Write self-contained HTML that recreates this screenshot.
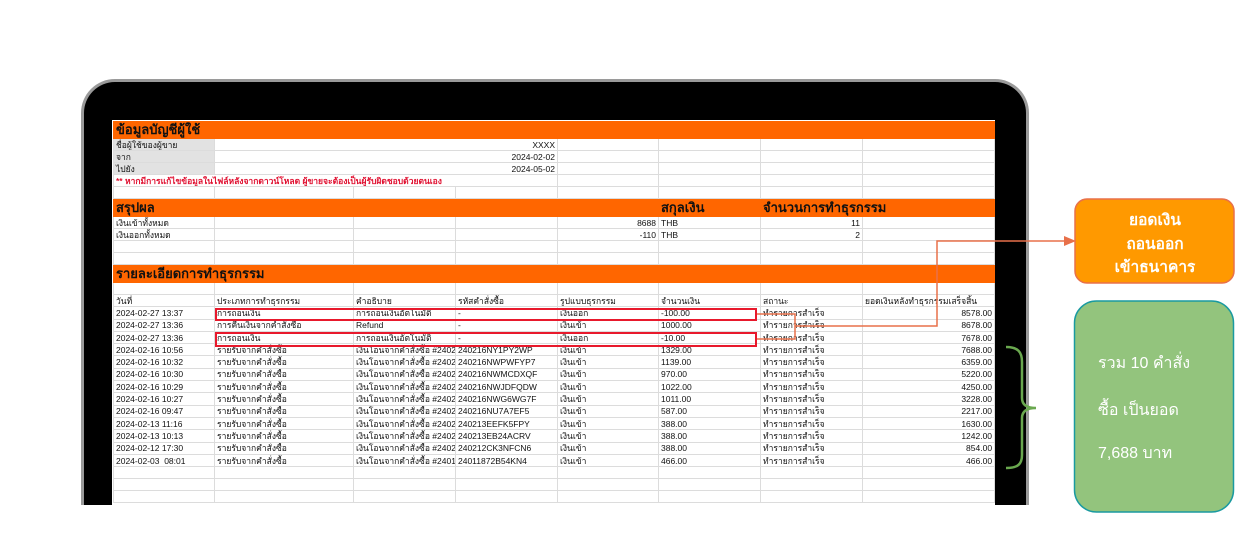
<!DOCTYPE html>
<html><head><meta charset="utf-8">
<style>
*{margin:0;padding:0;box-sizing:border-box}
body{width:1251px;height:526px;background:#fff;position:relative;overflow:hidden;font-family:"Liberation Sans","Noto Sans CJK SC",sans-serif}
.frame{position:absolute;left:81px;top:79px;width:948px;height:460px;border-radius:34px;background:#9a9a9a}
.black{position:absolute;left:84px;top:82px;width:942px;height:460px;border-radius:31px;background:#000}
.screen{position:absolute;left:112px;top:120px;width:883px;height:385px;background:#fff;overflow:hidden}
.cut{position:absolute;left:0;top:505px;width:1060px;height:40px;background:#fff}
table{border-collapse:collapse;table-layout:fixed;width:881px;position:absolute;left:1px;top:1px;font-size:8.5px;color:#111}
td{border:1px solid #dcdcdc;white-space:nowrap;overflow:hidden;padding:0 2px;line-height:10px;vertical-align:middle}
tr.o td{background:#ff6600;border-color:#ff6600;font-weight:bold;font-size:13px;color:#111}
.g{background:#e2e2e2}
.r{text-align:right}
.red{color:#e01030;font-weight:bold}
.box{position:absolute;border:2px solid #e8192c}
</style></head><body>
<div class="frame"></div>
<div class="black"></div>
<div class="screen">
<table>
<colgroup><col style="width:101px"><col style="width:139px"><col style="width:102px"><col style="width:102px"><col style="width:101px"><col style="width:102px"><col style="width:102px"><col style="width:132px"></colgroup>
<tr class="o" style="height:17px"><td colspan="8">ข้อมูลบัญชีผู้ใช้</td></tr>
<tr style="height:12px"><td class="g">ชื่อผู้ใช้ของผู้ขาย</td><td colspan="3" class="r">XXXX</td><td></td><td></td><td></td><td></td></tr>
<tr style="height:12px"><td class="g">จาก</td><td colspan="3" class="r">2024-02-02</td><td></td><td></td><td></td><td></td></tr>
<tr style="height:12px"><td class="g">ไปยัง</td><td colspan="3" class="r">2024-05-02</td><td></td><td></td><td></td><td></td></tr>
<tr style="height:12px"><td colspan="4" class="red">** หากมีการแก้ไขข้อมูลในไฟล์หลังจากดาวน์โหลด ผู้ขายจะต้องเป็นผู้รับผิดชอบด้วยตนเอง</td><td></td><td></td><td></td><td></td></tr>
<tr style="height:12px"><td></td><td></td><td></td><td></td><td></td><td></td><td></td><td></td></tr>
<tr class="o" style="height:18px"><td colspan="5">สรุปผล</td><td>สกุลเงิน</td><td colspan="2">จำนวนการทำธุรกรรม</td></tr>
<tr style="height:12px"><td>เงินเข้าทั้งหมด</td><td></td><td></td><td></td><td class="r">8688</td><td>THB</td><td class="r">11</td><td></td></tr>
<tr style="height:12px"><td>เงินออกทั้งหมด</td><td></td><td></td><td></td><td class="r">-110</td><td>THB</td><td class="r">2</td><td></td></tr>
<tr style="height:12px"><td></td><td></td><td></td><td></td><td></td><td></td><td></td><td></td></tr>
<tr style="height:12px"><td></td><td></td><td></td><td></td><td></td><td></td><td></td><td></td></tr>
<tr class="o" style="height:18px"><td colspan="8">รายละเอียดการทำธุรกรรม</td></tr>
<tr style="height:12px"><td></td><td></td><td></td><td></td><td></td><td></td><td></td><td></td></tr>
<tr style="height:12.3px"><td>วันที่</td><td>ประเภทการทำธุรกรรม</td><td>คำอธิบาย</td><td>รหัสคำสั่งซื้อ</td><td>รูปแบบธุรกรรม</td><td>จำนวนเงิน</td><td>สถานะ</td><td>ยอดเงินหลังทำธุรกรรมเสร็จสิ้น</td></tr>
<tr style="height:12.3px"><td>2024-02-27 13:37</td><td>การถอนเงิน</td><td>การถอนเงินอัตโนมัติ</td><td>-</td><td>เงินออก</td><td>-100.00</td><td>ทำรายการสำเร็จ</td><td class="r">8578.00</td></tr>
<tr style="height:12.3px"><td>2024-02-27 13:36</td><td>การคืนเงินจากคำสั่งซื้อ</td><td>Refund</td><td>-</td><td>เงินเข้า</td><td>1000.00</td><td>ทำรายการสำเร็จ</td><td class="r">8678.00</td></tr>
<tr style="height:12.3px"><td>2024-02-27 13:36</td><td>การถอนเงิน</td><td>การถอนเงินอัตโนมัติ</td><td>-</td><td>เงินออก</td><td>-10.00</td><td>ทำรายการสำเร็จ</td><td class="r">7678.00</td></tr>
<tr style="height:12.3px"><td>2024-02-16 10:56</td><td>รายรับจากคำสั่งซื้อ</td><td>เงินโอนจากคำสั่งซื้อ #240216</td><td>240216NY1PY2WP</td><td>เงินเข้า</td><td>1329.00</td><td>ทำรายการสำเร็จ</td><td class="r">7688.00</td></tr>
<tr style="height:12.3px"><td>2024-02-16 10:32</td><td>รายรับจากคำสั่งซื้อ</td><td>เงินโอนจากคำสั่งซื้อ #240216</td><td>240216NWPWFYP7</td><td>เงินเข้า</td><td>1139.00</td><td>ทำรายการสำเร็จ</td><td class="r">6359.00</td></tr>
<tr style="height:12.3px"><td>2024-02-16 10:30</td><td>รายรับจากคำสั่งซื้อ</td><td>เงินโอนจากคำสั่งซื้อ #240216</td><td>240216NWMCDXQF</td><td>เงินเข้า</td><td>970.00</td><td>ทำรายการสำเร็จ</td><td class="r">5220.00</td></tr>
<tr style="height:12.3px"><td>2024-02-16 10:29</td><td>รายรับจากคำสั่งซื้อ</td><td>เงินโอนจากคำสั่งซื้อ #240216</td><td>240216NWJDFQDW</td><td>เงินเข้า</td><td>1022.00</td><td>ทำรายการสำเร็จ</td><td class="r">4250.00</td></tr>
<tr style="height:12.3px"><td>2024-02-16 10:27</td><td>รายรับจากคำสั่งซื้อ</td><td>เงินโอนจากคำสั่งซื้อ #240216</td><td>240216NWG6WG7F</td><td>เงินเข้า</td><td>1011.00</td><td>ทำรายการสำเร็จ</td><td class="r">3228.00</td></tr>
<tr style="height:12.3px"><td>2024-02-16 09:47</td><td>รายรับจากคำสั่งซื้อ</td><td>เงินโอนจากคำสั่งซื้อ #240216</td><td>240216NU7A7EF5</td><td>เงินเข้า</td><td>587.00</td><td>ทำรายการสำเร็จ</td><td class="r">2217.00</td></tr>
<tr style="height:12.3px"><td>2024-02-13 11:16</td><td>รายรับจากคำสั่งซื้อ</td><td>เงินโอนจากคำสั่งซื้อ #240213</td><td>240213EEFK5FPY</td><td>เงินเข้า</td><td>388.00</td><td>ทำรายการสำเร็จ</td><td class="r">1630.00</td></tr>
<tr style="height:12.3px"><td>2024-02-13 10:13</td><td>รายรับจากคำสั่งซื้อ</td><td>เงินโอนจากคำสั่งซื้อ #240213</td><td>240213EB24ACRV</td><td>เงินเข้า</td><td>388.00</td><td>ทำรายการสำเร็จ</td><td class="r">1242.00</td></tr>
<tr style="height:12.3px"><td>2024-02-12 17:30</td><td>รายรับจากคำสั่งซื้อ</td><td>เงินโอนจากคำสั่งซื้อ #240212</td><td>240212CK3NFCN6</td><td>เงินเข้า</td><td>388.00</td><td>ทำรายการสำเร็จ</td><td class="r">854.00</td></tr>
<tr style="height:12.3px"><td>2024-02-03&nbsp; 08:01</td><td>รายรับจากคำสั่งซื้อ</td><td>เงินโอนจากคำสั่งซื้อ #240118</td><td>24011872B54KN4</td><td>เงินเข้า</td><td>466.00</td><td>ทำรายการสำเร็จ</td><td class="r">466.00</td></tr>
<tr style="height:12px"><td></td><td></td><td></td><td></td><td></td><td></td><td></td><td></td></tr>
<tr style="height:12px"><td></td><td></td><td></td><td></td><td></td><td></td><td></td><td></td></tr>
<tr style="height:12px"><td></td><td></td><td></td><td></td><td></td><td></td><td></td><td></td></tr>
</table>
</div>
<div class="cut"></div>
<div class="box" style="left:215px;top:308px;width:542px;height:13px"></div>
<div class="box" style="left:215px;top:332px;width:542px;height:15px"></div>
<svg style="position:absolute;left:0;top:0" width="1251" height="526">
<g fill="none" stroke="#e8704a" stroke-width="1.5">
<path d="M757 314H795V339H757"/>
<path d="M795 326H937V241H1066"/>
</g>
<path d="M1064 236L1076 241L1064 246Z" fill="#e8704a"/>
<path d="M1006 347C1018 347 1022 352 1022 362V398C1022 404 1026 408 1036 408C1026 408 1022 412 1022 418V455C1022 464 1018 468 1006 468" fill="none" stroke="#6aa84f" stroke-width="2.5"/>
<rect x="1075" y="199" width="159" height="84" rx="12" fill="#ff9900" stroke="#e8704a" stroke-width="1.5"/>
<rect x="1074.5" y="301" width="159" height="211" rx="22" fill="#93c47d" stroke="#1a9aa0" stroke-width="1.5"/>
<g fill="#fff" font-family="Liberation Sans, Noto Sans CJK SC, sans-serif" font-weight="bold" font-size="15.5" text-anchor="middle">
<text x="1155" y="225">ยอดเงิน</text>
<text x="1155" y="249">ถอนออก</text>
<text x="1155" y="272">เข้าธนาคาร</text>
</g>
<g fill="#fff" font-family="Liberation Sans, Noto Sans CJK SC, sans-serif" font-size="16">
<text x="1098" y="368">รวม 10 คำสั่ง</text>
<text x="1098" y="415">ซื้อ เป็นยอด</text>
<text x="1098" y="458">7,688 บาท</text>
</g>
</svg>
</body></html>
